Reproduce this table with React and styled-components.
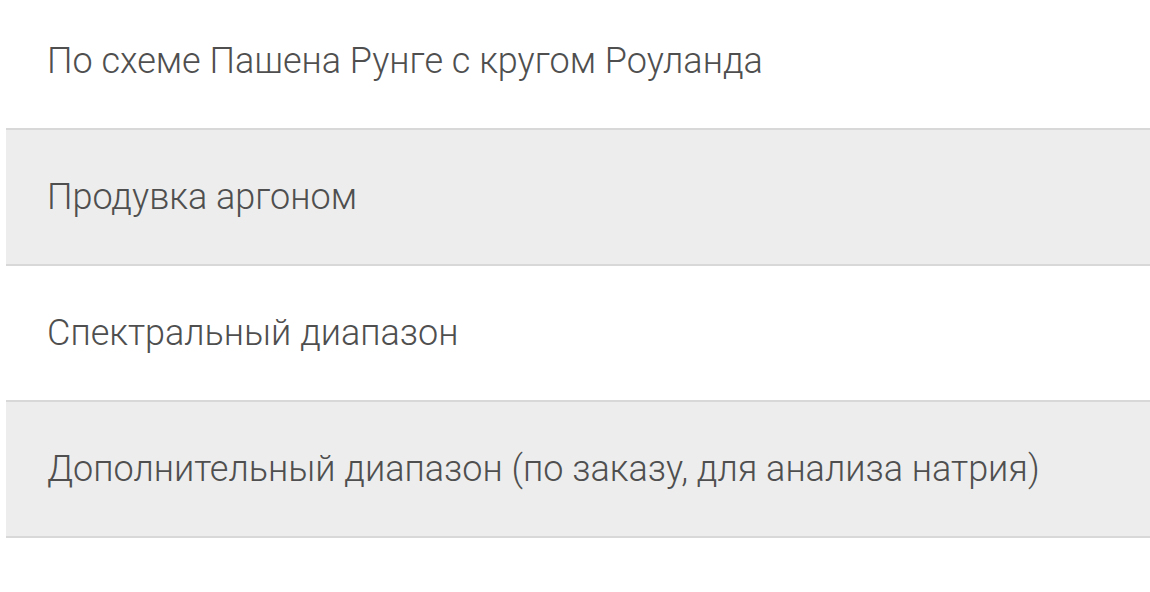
import React from 'react';
import styled, { createGlobalStyle } from 'styled-components';

const GlobalStyle = createGlobalStyle`
  body {
    margin: 0;
    background: #ffffff;
    font-family: Roboto, "Liberation Sans", sans-serif;
    overflow: hidden;
  }
`;

const List = styled.ul`
  list-style: none;
  margin: -6px 0 0 6px;
  padding: 0;
`;

const Row = styled.li`
  display: flex;
  align-items: center;
  height: 134px;
  padding-left: 41px;
  background: ${p => (p.$shaded ? '#ededed' : '#ffffff')};
  border-bottom: 2px solid #d8d8d8;
  font-size: 36px;
  font-weight: 300;
  color: #4f4f4f;
`;

const items = [
    'По схеме Пашена Рунге с кругом Роуланда',
    'Продувка аргоном',
    'Спектральный диапазон',
    'Дополнительный диапазон (по заказу, для анализа натрия)',
];

const App = () => (
    <>
        <GlobalStyle />
        <List>
            {items.map((text, i) => (
                <Row key={text} $shaded={i % 2 === 1}>{text}</Row>
            ))}
        </List>
    </>
);

export default App;
